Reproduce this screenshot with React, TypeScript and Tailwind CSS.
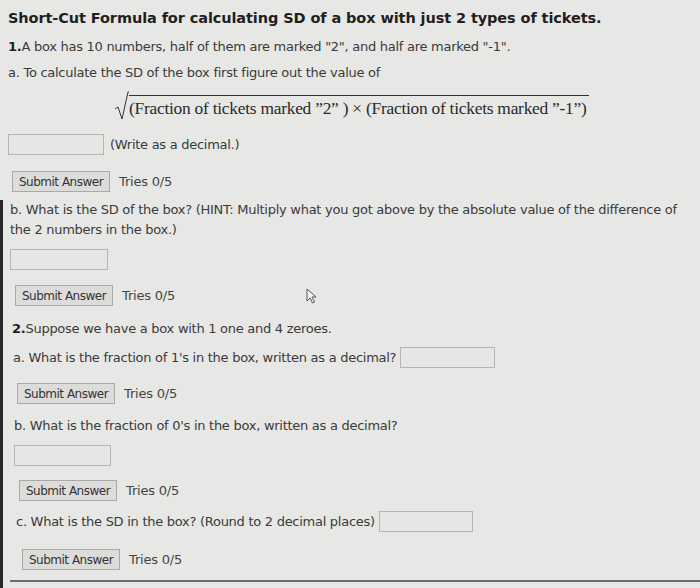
const font = { fontFamily: '"DejaVu Sans", Verdana, sans-serif' };

function Submit() {
  return (
    <div className="flex items-center gap-[9px]">
      <button className="h-[21px] px-[6px] border border-[#a9aaa7] bg-[#dcdddb] text-[12px] text-[#333] tracking-[-0.5px] leading-none">
        Submit Answer
      </button>
      <span className="text-[13px] text-[#444] tracking-[-0.2px]">Tries 0/5</span>
    </div>
  );
}

function Box({ w = "w-[96px]" }: { w?: string }) {
  return <div className={`${w} h-[21px] border border-[#b5b6b3] bg-[#e6e7e4]`} />;
}

const txt = "text-[13px] leading-[20px] text-[#3a3a3a] tracking-[-0.27px]";

export default function App() {
  return (
    <div
      className="w-[700px] h-[588px] bg-[#e7e8e5] text-[#2b2b2b] relative overflow-hidden"
      style={font}
    >
      <div className="absolute left-0 top-[200px] bottom-0 w-[3px] bg-[#2a2a2a]" />
      <div className="pl-[8px] pr-[6px] flex flex-col">
        <h1 className="mt-[4px] text-[14.5px] font-bold text-[#1f1f1f] leading-[28px] tracking-[-0.1px]">
          Short-Cut Formula for calculating SD of a box with just 2 types of tickets.
        </h1>
        <p className={`mt-[5px] ${txt}`}>
          <b className="text-[#1f1f1f]">1.</b>A box has 10 numbers, half of them are marked "2", and half are marked "-1".
        </p>
        <p className={`mt-[6px] ${txt}`}>
          a. To calculate the SD of the box first figure out the value of
        </p>
        <div className="mt-[9px] ml-[107px] flex items-end h-[29px]" style={{ fontFamily: '"Liberation Serif", "DejaVu Serif", serif' }}>
          <svg width="14" height="30" viewBox="0 0 14 30" className="shrink-0">
            <path d="M0 18 L3 16 L7 28 L13 1 L14 1" fill="none" stroke="#333" strokeWidth="1" />
          </svg>
          <span className="border-t border-[#333] text-[17.4px] leading-[25px] text-[#2a2a2a] pr-[2px] tracking-[-0.25px]">
            (Fraction of tickets marked ”2” ) × (Fraction of tickets marked ”-1”)
          </span>
        </div>
        <div className="mt-[13px] flex items-center gap-[6px]">
          <Box />
          <span className={txt}>(Write as a decimal.)</span>
        </div>
        <div className="mt-[16px] pl-[4px]">
          <Submit />
        </div>
        <p className={`mt-[8px] pl-[2px] ${txt}`}>
          b. What is the SD of the box? (HINT: Multiply what you got above by the absolute value of the difference of the 2 numbers in the box.)
        </p>
        <div className="mt-[9px] pl-[2px]">
          <Box w="w-[98px]" />
        </div>
        <div className="mt-[15px] pl-[7px]">
          <Submit />
        </div>
        <p className={`mt-[13px] pl-[4px] ${txt}`}>
          <b className="text-[#1f1f1f]">2.</b>Suppose we have a box with 1 one and 4 zeroes.
        </p>
        <div className="mt-[8px] pl-[5px] flex items-center gap-[4px]">
          <span className={txt}>a. What is the fraction of 1's in the box, written as a decimal?</span>
          <Box w="w-[95px]" />
        </div>
        <div className="mt-[15px] pl-[9px]">
          <Submit />
        </div>
        <p className={`mt-[12px] pl-[6px] ${txt}`}>
          b. What is the fraction of 0's in the box, written as a decimal?
        </p>
        <div className="mt-[9px] pl-[6px]">
          <Box w="w-[97px]" />
        </div>
        <div className="mt-[14px] pl-[11px]">
          <Submit />
        </div>
        <div className="mt-[10px] pl-[8px] flex items-center gap-[4px]">
          <span className={txt}>c. What is the SD in the box? (Round to 2 decimal places)</span>
          <Box w="w-[94px]" />
        </div>
        <div className="mt-[17px] pl-[14px]">
          <Submit />
        </div>
      </div>
      <div className="absolute left-[10px] right-0 top-[580px] h-[2px] bg-[#6b6c69]" />
      <svg className="absolute left-[306px] top-[288px]" width="12" height="16" viewBox="0 0 12 16">
        <path d="M1 1 L1 13 L4 10 L6.5 15 L8.5 14 L6 9 L10 9 Z" fill="#f2f2f2" stroke="#555" strokeWidth="1" />
      </svg>
    </div>
  );
}
